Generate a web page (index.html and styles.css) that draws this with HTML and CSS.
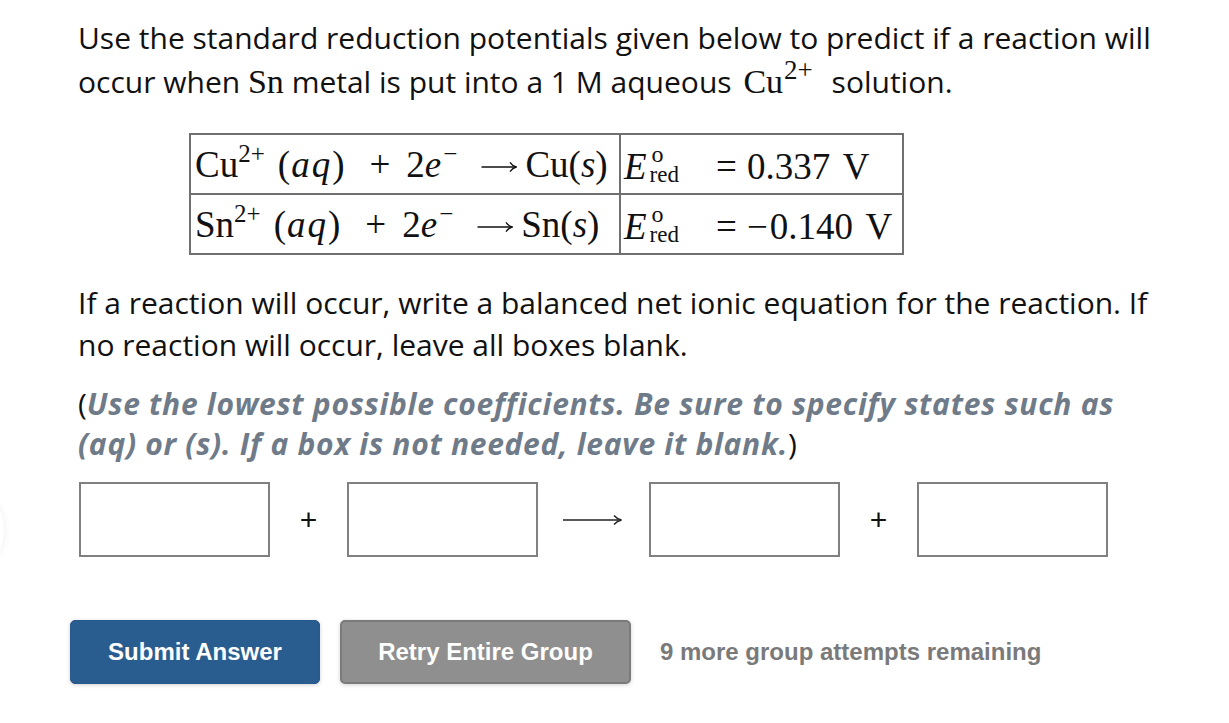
FILE: index.html
```html
<!DOCTYPE html>
<html>
<head>
<meta charset="utf-8">
<link rel="stylesheet" href="styles.css">
</head>
<body>
<div class="edge-shadow"></div>
<main class="question">
  <p class="intro">Use the standard reduction potentials given below to predict if a reaction will occur when <span class="m m-inline">Sn</span> metal is put into a 1 M aqueous <span class="m m-inline m-cu">Cu<sup class="m-sup">2+</sup></span> solution.</p>

  <table class="potentials">
    <tr>
      <td class="eq">Cu<sup>2+</sup><span class="sp1"></span><span class="it">(<i>aq</i>)</span><span class="bin">+</span>2<i>e</i><sup class="neg">−</sup><span class="rel"><svg class="rarrow" width="36" height="14" viewBox="0 0 36 14"><line x1="0.5" y1="7" x2="34" y2="7" stroke="#111" stroke-width="1.5"/><path d="M29 2.3 Q31.5 6 35.3 7 Q31.5 8 29 11.7" fill="none" stroke="#111" stroke-width="1.4"/></svg></span>Cu(<i>s</i>)</td>
      <td class="pot"><span class="ered"><i>E</i><span class="supsub"><span class="o">o</span><span class="red">red</span></span></span><span class="eqs">=</span><span class="val">0.337 V</span></td>
    </tr>
    <tr>
      <td class="eq">Sn<sup>2+</sup><span class="sp1"></span><span class="it">(<i>aq</i>)</span><span class="bin">+</span>2<i>e</i><sup class="neg">−</sup><span class="rel"><svg class="rarrow" width="36" height="14" viewBox="0 0 36 14"><line x1="0.5" y1="7" x2="34" y2="7" stroke="#111" stroke-width="1.5"/><path d="M29 2.3 Q31.5 6 35.3 7 Q31.5 8 29 11.7" fill="none" stroke="#111" stroke-width="1.4"/></svg></span>Sn(<i>s</i>)</td>
      <td class="pot"><span class="ered"><i>E</i><span class="supsub"><span class="o">o</span><span class="red">red</span></span></span><span class="eqs">=</span><span class="val"><span class="minus">−</span>0.140 V</span></td>
    </tr>
  </table>

  <p class="instr">If a reaction will occur, write a balanced net ionic equation for the reaction. If no reaction will occur, leave all boxes blank.</p>

  <p class="hint">(<em>Use the lowest possible coefficients. Be sure to specify states such as (aq) or (s). If a box is not needed, leave it blank.</em>)</p>

  <div class="equation">
    <div class="box"></div>
    <div class="op">+</div>
    <div class="box"></div>
    <div class="arrow">
      <svg width="60" height="14" viewBox="0 0 60 14"><line x1="0" y1="7" x2="57" y2="7" stroke="#222" stroke-width="1.6"/><path d="M51 2.5 Q54 6 58.5 7 Q54 8 51 11.5" fill="none" stroke="#222" stroke-width="1.5"/></svg>
    </div>
    <div class="box"></div>
    <div class="op">+</div>
    <div class="box"></div>
  </div>

  <div class="actions">
    <button class="btn btn-submit">Submit Answer</button>
    <button class="btn btn-retry">Retry Entire Group</button>
    <span class="attempts">9 more group attempts remaining</span>
  </div>
</main>
</body>
</html>
```

FILE: styles.css
```css
html, body {
  margin: 0;
  padding: 0;
  background: #ffffff;
}

body {
  font-family: "Open Sans", "Noto Sans", sans-serif;
  color: #111;
  position: relative;
  width: 1229px;
  height: 723px;
  overflow: hidden;
}

.edge-shadow {
  position: absolute;
  left: -30px;
  top: 500px;
  width: 34px;
  height: 60px;
  border-radius: 50%;
  box-shadow: 0 0 8px rgba(0,0,0,0.07);
}

.question {
  padding: 16px 0 0 78px;
  width: 1075px;
}

.intro {
  margin: 0;
  font-size: 30px;
  line-height: 44px;
}

.m {
  font-family: "Liberation Serif", "DejaVu Serif", serif;
}

.m-inline {
  font-size: 34px;
}

.m-cu {
  margin-left: 4px;
}

.m-sup {
  font-size: 27px;
  vertical-align: 14px;
  line-height: 0;
  margin-left: 1px;
  margin-right: 11px;
}

.potentials {
  margin: 29px 0 0 111px;
  border-collapse: collapse;
  font-family: "Liberation Serif", "DejaVu Serif", serif;
  font-size: 37px;
  color: #111;
}

.potentials td {
  border: 2px solid #707070;
  padding: 0 6px;
  height: 58px;
  white-space: nowrap;
  line-height: 1;
}

.potentials td.eq {
  width: 418px;
  padding-left: 4px;
}

.potentials td.pot {
  width: 272px;
  padding-left: 3px;
}

.potentials sup {
  font-size: 25px;
  vertical-align: 15px;
  line-height: 0;
}

.potentials sup.neg {
  margin-left: 2px;
}

.it i {
  letter-spacing: 2px;
}

.it {
  letter-spacing: 1px;
}

.sp1 { display: inline-block; width: 13px; }
.bin { margin: 0 16px 0 24px; }
.rel { margin: 0 8px 0 24px; }

.rarrow {
  vertical-align: 3px;
}

.ered {
  display: inline-block;
  width: 82px;
  white-space: nowrap;
}

.supsub {
  display: inline-flex;
  flex-direction: column;
  vertical-align: 17px;
  margin-left: 3px;
}

.supsub .o {
  font-size: 24px;
  line-height: 22px;
  padding-left: 2px;
}

.supsub .red {
  font-size: 23px;
  line-height: 20px;
}

.eqs {
  margin: 0 10px 0 10px;
}

.val {
  word-spacing: 4px;
}

.minus {
  margin-right: 2px;
}

.instr {
  margin: 27px 0 0 0;
  font-size: 30px;
  line-height: 42px;
}

.hint {
  margin: 18px 0 0 0;
  font-size: 30px;
  line-height: 40px;
  color: #111;
}

.hint em {
  font-weight: 700;
  font-style: italic;
  color: #6f7b89;
  letter-spacing: 0.7px;
}

.equation {
  display: flex;
  align-items: center;
  margin-top: 18px;
  margin-left: 1px;
}

.box {
  width: 187px;
  height: 71px;
  border: 2px solid #808080;
  background: #fff;
}

.op {
  width: 77px;
  text-align: center;
  font-family: "Liberation Sans", Arial, sans-serif;
  font-size: 30px;
  line-height: 1;
  color: #111;
}

.arrow {
  width: 111px;
  display: flex;
  justify-content: center;
  padding-right: 2px;
  box-sizing: border-box;
}

.actions {
  display: flex;
  align-items: center;
  margin-top: 63px;
  margin-left: -8px;
}

.btn {
  font-family: "Liberation Sans", Arial, sans-serif;
  font-weight: 700;
  font-size: 24px;
  color: #fff;
  height: 64px;
  border-radius: 5px;
  cursor: pointer;
  box-shadow: 0 1px 4px rgba(0,0,0,0.18);
}

.btn-submit {
  width: 250px;
  background: #2a5d8f;
  border: 1px solid #28598a;
}

.btn-retry {
  width: 291px;
  margin-left: 20px;
  background: #8f8f8f;
  border: 2px solid #7b7b7b;
}

.attempts {
  margin-left: 29px;
  font-family: "Liberation Sans", Arial, sans-serif;
  font-weight: 700;
  font-size: 24px;
  color: #7a7a7a;
}
```
